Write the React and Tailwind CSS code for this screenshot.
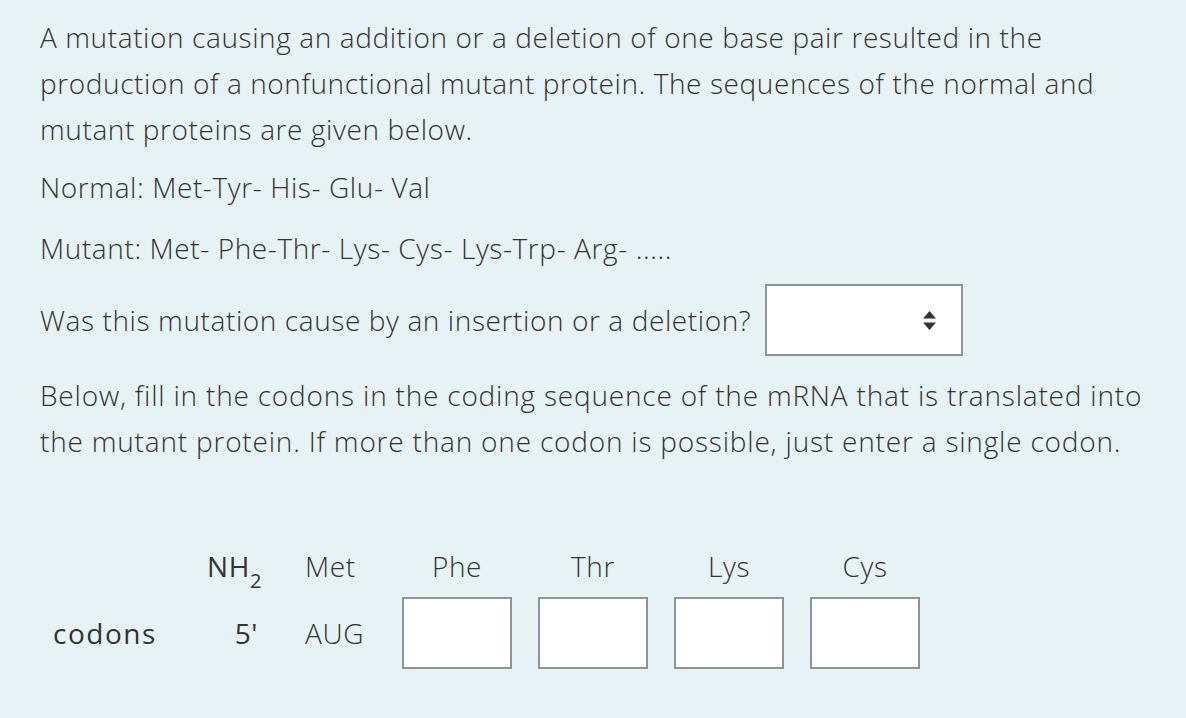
import React from "react";

const font = { fontFamily: "'Open Sans', Roboto, 'Liberation Sans', sans-serif" };

function Box() {
  return <div className="w-[110px] h-[72px] bg-white border-2 border-[#8e9399]" />;
}

function SelectArrows() {
  return (
    <svg width="15" height="21" viewBox="0 0 15 21">
      <path d="M7.5 1 L14 8.5 H1 Z" fill="#333" />
      <path d="M7.5 20 L14 12.5 H1 Z" fill="#333" />
    </svg>
  );
}

export default function App() {
  const aminos = ["Phe", "Thr", "Lys", "Cys"];
  return (
    <div
      className="w-[1186px] h-[718px] bg-[#e7f2f4] text-[#333] font-light text-[28px] tracking-[0.6px] leading-[46px] pl-[40px] pt-[14px] overflow-hidden whitespace-nowrap"
      style={font}
    >
      <p>
        A mutation causing an addition or a deletion of one base pair resulted in the
        <br />
        production of a nonfunctional mutant protein. The sequences of the normal and
        <br />
        mutant proteins are given below.
      </p>
      <p className="mt-[12px]">Normal: Met-Tyr- His- Glu- Val</p>
      <p className="mt-[15px]">Mutant: Met- Phe-Thr- Lys- Cys- Lys-Trp- Arg- .....</p>
      <div className="flex items-center mt-[13px] h-[72px]">
        <span>Was this mutation cause by an insertion or a deletion?</span>
        <div className="ml-[14px] w-[198px] h-[72px] bg-white border-2 border-[#8e9399] flex items-center justify-end pr-[24px]">
          <SelectArrows />
        </div>
      </div>
      <p className="mt-[16px] tracking-[0.8px]">
        Below, fill in the codons in the coding sequence of the mRNA that is translated into
        <br />
        the mutant protein. If more than one codon is possible, just enter a single codon.
      </p>
      <div className="grid grid-cols-[150px_85px_114px_136px_136px_136px_136px] mt-[79px]">
        <div />
        <div className="text-right pr-[13px] font-normal">
          NH<sub className="text-[20px] align-[-6px]">2</sub>
        </div>
        <div className="pl-[30px]">Met</div>
        {aminos.map((a) => (
          <div key={a} className="text-center">{a}</div>
        ))}
        <div className="pl-[13px] font-normal tracking-[1.5px] h-[72px] mt-[8px] flex items-center">codons</div>
        <div className="pr-[17px] font-normal h-[72px] mt-[8px] flex items-center justify-end">5'</div>
        <div className="pl-[30px] h-[72px] mt-[8px] flex items-center">AUG</div>
        {aminos.map((a) => (
          <div key={a} className="flex justify-center mt-[8px]">
            <Box />
          </div>
        ))}
      </div>
    </div>
  );
}
